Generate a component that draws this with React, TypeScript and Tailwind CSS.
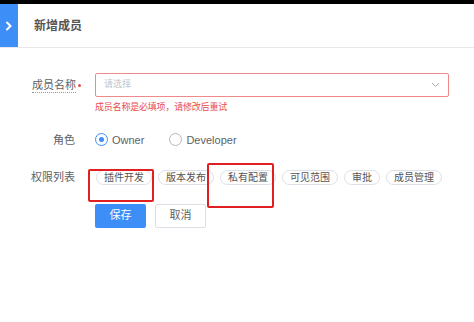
import React from "react";

const perms = ["插件开发", "版本发布", "私有配置", "可见范围", "审批", "成员管理"];

const font = { fontFamily: '"Liberation Sans", "Noto Sans CJK SC", sans-serif' };

const Radio: React.FC<{ checked?: boolean; label: string }> = ({ checked, label }) => (
  <div className="flex items-center gap-[4px]">
    <span
      className={`w-[13px] h-[13px] rounded-full border flex items-center justify-center ${
        checked ? "border-[#3d8ef6]" : "border-[#b8b8b8]"
      }`}
    >
      {checked && <span className="w-[5px] h-[5px] rounded-full bg-[#3d8ef6]" />}
    </span>
    <span className="text-[11px] text-[#606266]">{label}</span>
  </div>
);

export default function App() {
  return (
    <div className="relative w-[474px] h-[322px] bg-white overflow-hidden" style={font}>
      <div className="h-[4px] bg-black" />

      {/* header */}
      <div className="flex items-center h-[44px] border-b border-[#e8e8e8]">
        <div className="w-[18px] h-full bg-[#3d8ef6] flex items-center justify-center">
          <svg width="8" height="10" viewBox="0 0 8 10" fill="none">
            <path d="M2 1.5L5.5 5L2 8.5" stroke="white" strokeWidth="2" strokeLinecap="round" />
          </svg>
        </div>
        <h1 className="ml-[16px] text-[12px] font-bold text-[#555]">新增成员</h1>
      </div>

      {/* form */}
      <div className="pt-[25px]">
        <div className="flex items-center">
          <div className="w-[76px] text-right text-[11px] text-[#606266]">
            <span className="border-b border-dotted border-[#999] pb-[1px]">成员名称</span>
          </div>
          <div className="w-[19px] pl-[2px]">
            <span className="block w-[3px] h-[3px] rounded-full bg-[#e84c4c]" />
          </div>
          <div className="w-[354px] h-[24px] border border-[#f08a8a] rounded-[2px] flex items-center justify-between px-[8px]">
            <span className="text-[9px] text-[#c0c4cc]">请选择</span>
            <svg width="9" height="6" viewBox="0 0 9 6" fill="none">
              <path d="M1 1l3.5 3.5L8 1" stroke="#aaa" strokeWidth="1" />
            </svg>
          </div>
        </div>
        <div className="ml-[95px] mt-[4px] text-[9px] text-[#e84c4c] tracking-[-0.2px]">
          成员名称是必填项，请修改后重试
        </div>

        <div className="flex items-center mt-[17px]">
          <div className="w-[75px] text-right text-[11px] text-[#606266]">角色</div>
          <div className="ml-[20px] flex items-center gap-[25px]">
            <Radio checked label="Owner" />
            <Radio label="Developer" />
          </div>
        </div>

        <div className="flex items-center mt-[21px]">
          <div className="w-[75px] text-right text-[11px] text-[#606266]">权限列表</div>
          <div className="ml-[21px] flex items-center gap-[6px]">
            {perms.map((p) => (
              <span
                key={p}
                className="h-[15px] px-[7px] rounded-full border border-[#dcdfe6] text-[10px] leading-[13px] text-[#555] flex items-center"
              >
                {p}
              </span>
            ))}
          </div>
        </div>

        <div className="flex items-center gap-[9px] ml-[95px] mt-[18px]">
          <button className="w-[51px] h-[24px] bg-[#3d8ef6] text-white text-[11px] rounded-[2px]">保存</button>
          <button className="w-[51px] h-[24px] bg-white border border-[#dcdfe6] text-[#606266] text-[11px] rounded-[2px]">
            取消
          </button>
        </div>
      </div>

      {/* annotation boxes */}
      <div className="absolute left-[88px] top-[169px] w-[66px] h-[33px] border-2 border-[#e02020] rounded-[2px]" />
      <div className="absolute left-[207px] top-[163px] w-[67px] h-[45px] border-2 border-[#e02020] rounded-[2px]" />
    </div>
  );
}
